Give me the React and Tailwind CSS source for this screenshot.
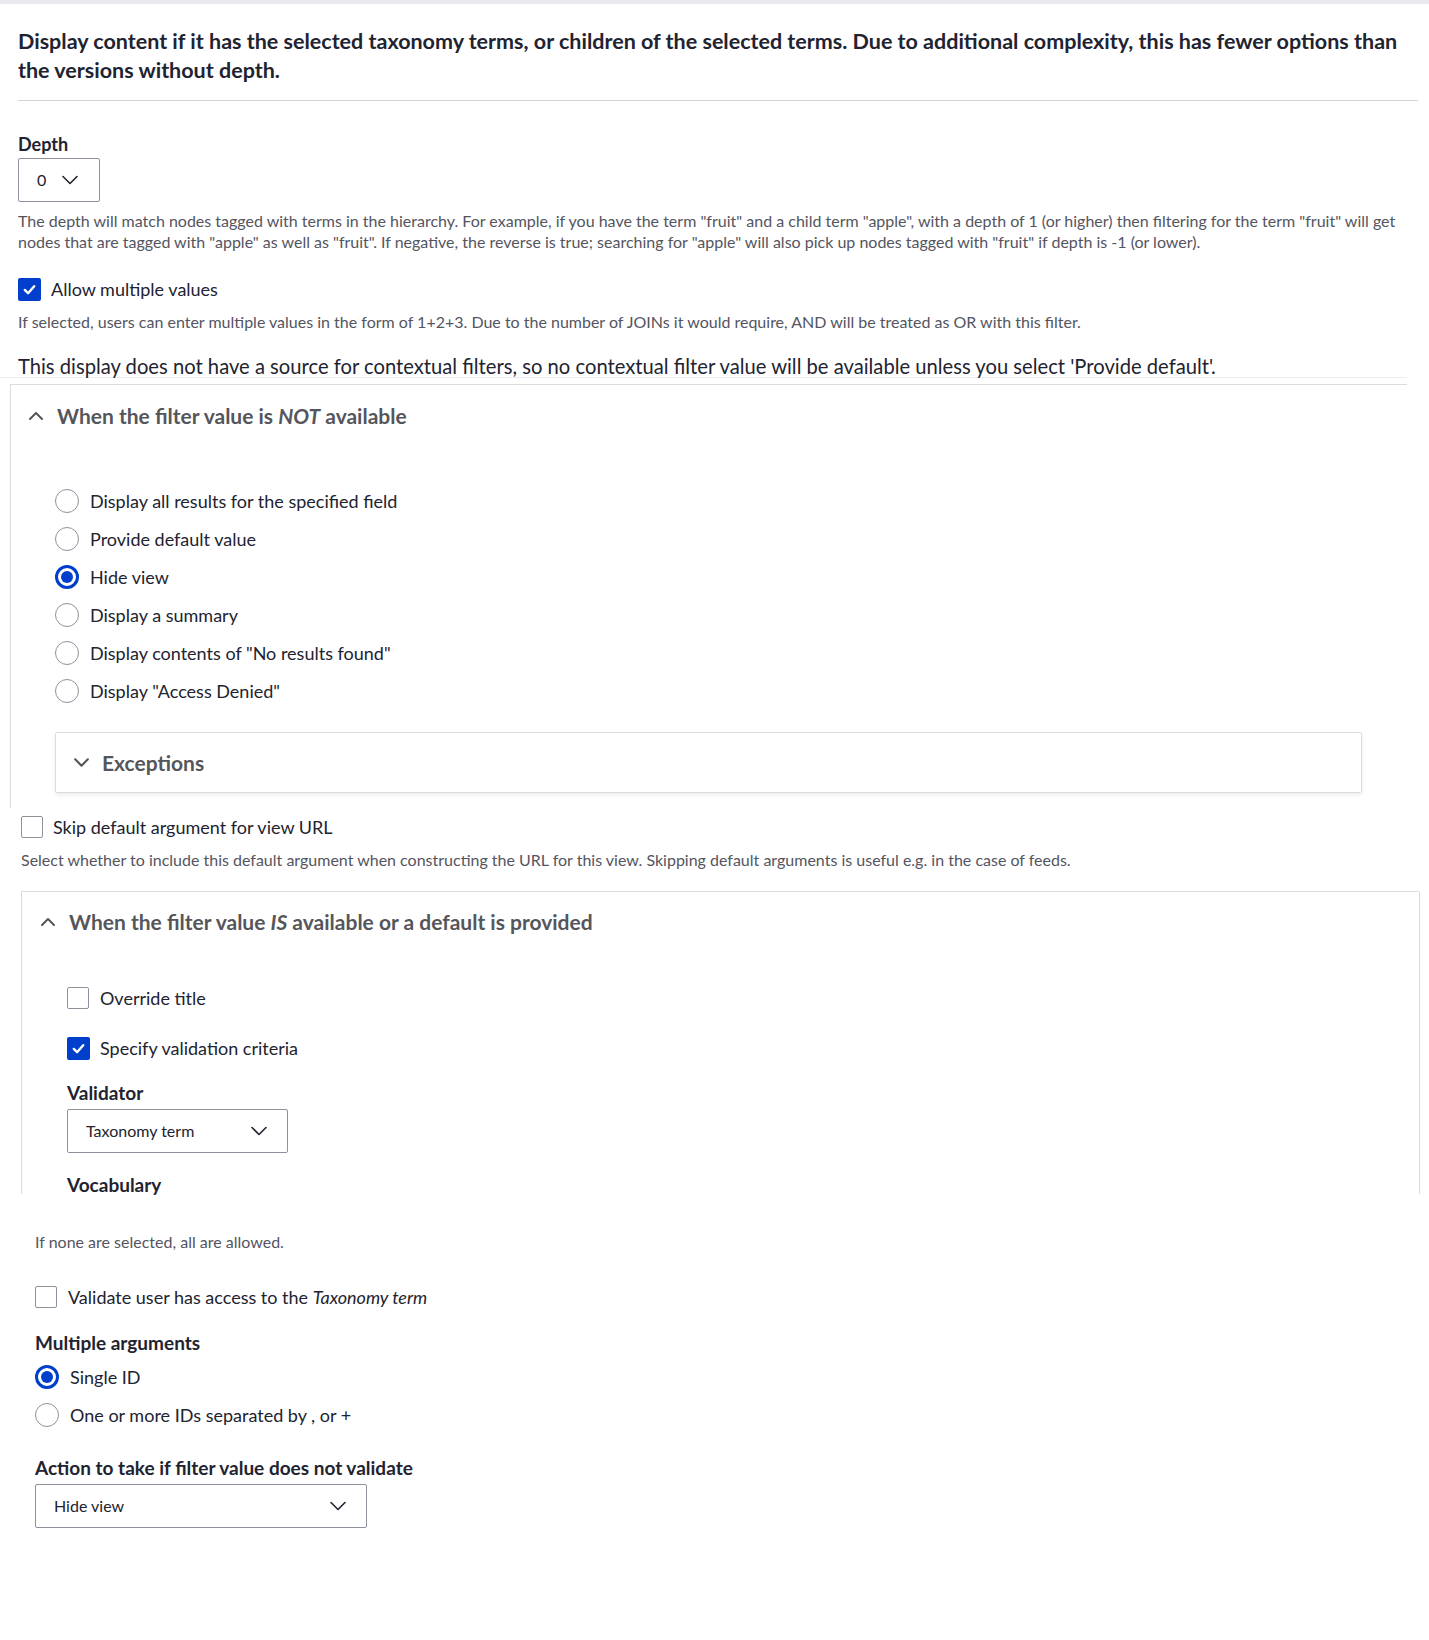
import React from "react";

const FONT = { fontFamily: "Lato, 'Liberation Sans', sans-serif" };

function Chevron({ dir = "down", className = "" }) {
  const pts = dir === "down" ? "3,6 9,12 15,6" : "3,12 9,6 15,12";
  return (
    <svg viewBox="0 0 18 18" className={className} fill="none" stroke="currentColor" strokeWidth="2" strokeLinecap="round" strokeLinejoin="round">
      <polyline points={pts} />
    </svg>
  );
}

function Checkbox({ checked, className = "" }) {
  if (checked) {
    return (
      <span className={"flex items-center justify-center w-[23px] h-[23px] rounded-[2px] bg-[#003ecc] shrink-0 " + className}>
        <svg viewBox="0 0 16 16" className="w-[15px] h-[15px]" fill="none" stroke="#fff" strokeWidth="2.6" strokeLinecap="round" strokeLinejoin="round">
          <polyline points="3,8.5 6.5,12 13,4.5" />
        </svg>
      </span>
    );
  }
  return <span className={"block w-[22px] h-[22px] rounded-[2px] border border-[#8e929c] bg-white shrink-0 " + className} />;
}

function Radio({ checked }) {
  if (checked) {
    return (
      <span className="flex items-center justify-center w-[24px] h-[24px] rounded-full border-[3px] border-[#003ecc] shrink-0">
        <span className="block w-[12px] h-[12px] rounded-full bg-[#003ecc]" />
      </span>
    );
  }
  return <span className="block w-[24px] h-[24px] rounded-full border border-[#8e929c] shrink-0" />;
}

function Select({ value, width }) {
  return (
    <div className={"flex items-center justify-between border border-[#8e929c] rounded-[2px] h-[44px] bg-white " + width}>
      <span className="text-[16px] text-[#222330]">{value}</span>
      <svg viewBox="0 0 20 20" className="w-[20px] h-[20px]" fill="none" stroke="#222330" strokeWidth="1.6" strokeLinecap="round" strokeLinejoin="round">
        <polyline points="3,6.5 10,13.5 17,6.5" />
      </svg>
    </div>
  );
}

function RadioRow({ checked, children }) {
  return (
    <div className="flex items-center h-[38px] gap-[11px]">
      <Radio checked={checked} />
      <span className="text-[18px] text-[#222330]">{children}</span>
    </div>
  );
}

export default function App() {
  return (
    <div className="bg-white min-h-[1640px] text-[#222330]" style={FONT}>
      <div className="h-[4px] bg-[#e9eaf0]" />

      <div className="pl-[18px] pr-[11px]">
        <p className="pt-[23px] max-w-[1392px] text-[21.5px] leading-[29px] font-bold text-[#222330]">
          Display content if it has the selected taxonomy terms, or children of the selected terms. Due to additional complexity, this has fewer options than the versions without depth.
        </p>
        <div className="mt-[15px] border-t border-[#d3d4d9]" />

        <p className="mt-[31px] text-[18px] leading-[24px] font-bold">Depth</p>
        <div className="mt-[2px] flex items-center gap-[14px] w-[82px] h-[44px] border border-[#8e929c] rounded-[2px] pl-[18px]">
          <span className="text-[16px]">0</span>
          <svg viewBox="0 0 20 20" className="w-[20px] h-[20px]" fill="none" stroke="#222330" strokeWidth="1.6" strokeLinecap="round" strokeLinejoin="round">
            <polyline points="3,6.5 10,13.5 17,6.5" />
          </svg>
        </div>
        <p className="mt-[8px] max-w-[1385px] text-[16px] leading-[21px] text-[#545560]">
          The depth will match nodes tagged with terms in the hierarchy. For example, if you have the term "fruit" and a child term "apple", with a depth of 1 (or higher) then filtering for the term "fruit" will get nodes that are tagged with "apple" as well as "fruit". If negative, the reverse is true; searching for "apple" will also pick up nodes tagged with "fruit" if depth is -1 (or lower).
        </p>

        <div className="mt-[25px] flex items-center gap-[10px] h-[24px]">
          <Checkbox checked />
          <span className="text-[18px]">Allow multiple values</span>
        </div>
        <p className="mt-[10px] text-[16px] leading-[21px] text-[#545560]">
          If selected, users can enter multiple values in the form of 1+2+3. Due to the number of JOINs it would require, AND will be treated as OR with this filter.
        </p>

        <p className="mt-[20px] text-[20.2px] leading-[28px]">
          This display does not have a source for contextual filters, so no contextual filter value will be available unless you select 'Provide default'.
        </p>
      </div>

      <div className="w-[1407px] border-t border-[#eeeef1] mt-[-3px]" />

      <div className="ml-[10px] w-[1397px] h-[424px] mt-[6px] border-t border-l border-[#dcdce0]">
        <div className="flex items-center h-[62px] pl-[16px] gap-[12px] text-[#55565b]">
          <Chevron dir="up" className="w-[18px] h-[18px]" />
          <span className="text-[21px] font-bold">
            When the filter value is <em>NOT</em> available
          </span>
        </div>
        <div className="pl-[44px] pt-[35px]">
          <RadioRow>Display all results for the specified field</RadioRow>
          <RadioRow>Provide default value</RadioRow>
          <RadioRow checked>Hide view</RadioRow>
          <RadioRow>Display a summary</RadioRow>
          <RadioRow>Display contents of "No results found"</RadioRow>
          <RadioRow>Display "Access Denied"</RadioRow>

          <div className="mt-[22px] w-[1307px] h-[61px] flex items-center gap-[11px] pl-[16px] border border-[#dcdce0] rounded-[2px] shadow-[0_2px_4px_rgba(0,0,0,0.08)] text-[#55565b]">
            <Chevron className="w-[19px] h-[19px]" />
            <span className="text-[21px] font-bold">Exceptions</span>
          </div>
        </div>
      </div>

      <div className="pl-[21px]">
        <div className="mt-[8px] flex items-center gap-[10px] h-[22px]">
          <Checkbox />
          <span className="text-[18px]">Skip default argument for view URL</span>
        </div>
        <p className="mt-[11px] text-[16px] leading-[21px] text-[#545560]">
          Select whether to include this default argument when constructing the URL for this view. Skipping default arguments is useful e.g. in the case of feeds.
        </p>

        <div className="mt-[21px] w-[1399px] h-[303px] border-t border-l border-r border-[#dcdce0] rounded-tr-[2px]">
          <div className="flex items-center h-[60px] pl-[17px] gap-[12px] text-[#55565b]">
            <Chevron dir="up" className="w-[18px] h-[18px]" />
            <span className="text-[21px] font-bold">
              When the filter value <em>IS</em> available or a default is provided
            </span>
          </div>
          <div className="pl-[45px] pt-[35px]">
            <div className="flex items-center gap-[11px] h-[22px]">
              <Checkbox />
              <span className="text-[18px]">Override title</span>
            </div>
            <div className="mt-[28px] flex items-center gap-[10px] h-[22px]">
              <Checkbox checked />
              <span className="text-[18px]">Specify validation criteria</span>
            </div>
            <p className="mt-[22px] text-[19px] leading-[24px] font-bold">Validator</p>
            <div className="mt-[4px]">
              <Select value="Taxonomy term" width="w-[221px] pl-[18px] pr-[18px]" />
            </div>
            <p className="mt-[20px] text-[19px] leading-[24px] font-bold">Vocabulary</p>
          </div>
        </div>
      </div>

      <div className="pl-[35px]">
        <p className="mt-[37px] text-[16px] leading-[21px] text-[#545560]">If none are selected, all are allowed.</p>

        <div className="mt-[34px] flex items-center gap-[11px] h-[22px]">
          <Checkbox />
          <span className="text-[18px]">
            Validate user has access to the <em>Taxonomy term</em>
          </span>
        </div>

        <p className="mt-[23px] text-[19px] leading-[24px] font-bold">Multiple arguments</p>
        <div className="mt-[3px]">
          <RadioRow checked>Single ID</RadioRow>
          <RadioRow>One or more IDs separated by , or +</RadioRow>
        </div>

        <p className="mt-[22px] text-[19px] leading-[24px] font-bold">Action to take if filter value does not validate</p>
        <div className="mt-[4px]">
          <Select value="Hide view" width="w-[332px] pl-[18px] pr-[18px]" />
        </div>
      </div>
    </div>
  );
}
